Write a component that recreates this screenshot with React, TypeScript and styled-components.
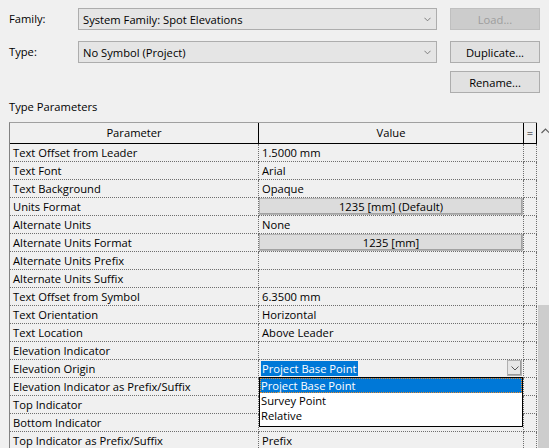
import React from 'react';
import styled, { createGlobalStyle } from 'styled-components';

const GlobalStyle = createGlobalStyle`
  html, body {
    margin: 0;
    padding: 0;
    background: #f0f0f0;
  }
  body {
    font-family: 'Open Sans', 'Noto Sans', sans-serif;
    font-size: 11.2px;
    color: #000;
  }
`;

const Window = styled.div`
  width: 549px;
  height: 448px;
  overflow: hidden;
  background: #f0f0f0;
`;

const TopGrid = styled.div`
  display: grid;
  grid-template-columns: 56px 359px 90px;
  grid-template-rows: 33px 30px 22px;
  column-gap: 13px;
  padding: 8px 0 0 9px;
  align-items: start;
`;

const Label = styled.div`
  line-height: 22px;
`;

const Combo = styled.div`
  height: 22px;
  box-sizing: border-box;
  border: 1px solid #adadad;
  background: #e5e5e5;
  display: flex;
  align-items: center;
  justify-content: space-between;
  padding: 0 5px 0 4px;
`;

const Button = styled.div<{ $disabled?: boolean }>`
  grid-column: 3;
  height: 22px;
  box-sizing: border-box;
  border: 1px solid ${(p) => (p.$disabled ? '#bfbfbf' : '#adadad')};
  background: ${(p) => (p.$disabled ? '#cccccc' : '#e1e1e1')};
  color: ${(p) => (p.$disabled ? '#9d9d9d' : '#000')};
  display: flex;
  align-items: center;
  justify-content: center;
`;

const SectionLabel = styled.div`
  padding-left: 9px;
  margin: 6px 0 7px;
  line-height: 16px;
`;

const TableArea = styled.div`
  display: flex;
  margin-left: 9px;
`;

const Table = styled.div`
  width: 528px;
  flex: none;
  border-left: 1px solid #828282;
  border-top: 1px solid #a0a0a0;
  box-sizing: border-box;
`;

const Row = styled.div<{ $header?: boolean }>`
  display: grid;
  grid-template-columns: 249px 265px 13px;
  height: ${(p) => (p.$header ? 21 : 18)}px;
`;

const Cell = styled.div<{ $header?: boolean; $center?: boolean }>`
  position: relative;
  box-sizing: border-box;
  display: flex;
  align-items: center;
  justify-content: ${(p) => (p.$center || p.$header ? 'center' : 'flex-start')};
  padding-left: ${(p) => (p.$center || p.$header ? 0 : 3)}px;
  padding-bottom: ${(p) => (p.$center ? 0 : 1)}px;
  border-right: 1px ${(p) => (p.$header ? 'solid #000' : 'dotted #6e6e6e')};
  border-bottom: 1px ${(p) => (p.$header ? 'solid #000' : 'dotted #6e6e6e')};
  white-space: nowrap;
`;

const ValueButton = styled.div`
  flex: 1;
  align-self: stretch;
  box-sizing: border-box;
  background: #dcdcdc;
  border: 1px solid #b4b4b4;
  box-shadow: inset -1px -1px 0 #a2a2a2;
  display: flex;
  align-items: center;
  justify-content: center;
`;

const Selected = styled.span`
  background: #0078d7;
  color: #fff;
  line-height: 15px;
  padding: 0 1px;
  margin-left: -1px;
`;

const DropButton = styled.div`
  position: absolute;
  right: 1px;
  top: 0;
  width: 15px;
  height: 16px;
  box-sizing: border-box;
  background: #e6e6e6;
  border: 1px solid #b0b0b0;
  box-shadow: inset -1px -1px 0 #9a9a9a;
  display: flex;
  align-items: center;
  justify-content: center;
`;

const DropList = styled.div`
  position: absolute;
  top: 100%;
  left: 0;
  width: 264px;
  height: 50px;
  box-sizing: border-box;
  border: 1px solid #000;
  background: #fff;
  z-index: 2;
`;

const Option = styled.div<{ $active?: boolean }>`
  height: 15px;
  line-height: 15px;
  box-sizing: border-box;
  padding-left: 1px;
  background: ${(p) => (p.$active ? '#0078d7' : 'transparent')};
  color: ${(p) => (p.$active ? '#fff' : '#000')};
  outline: ${(p) => (p.$active ? '1px dotted #e88a2a' : 'none')};
  outline-offset: -1px;
`;

const Scrollbar = styled.div`
  width: 17px;
  flex: none;
  background: #f0f0f0;
  display: flex;
  flex-direction: column;
  align-items: center;
`;

const ScrollArrow = styled.div`
  height: 17px;
  display: flex;
  align-items: center;
  justify-content: center;
`;

const Thumb = styled.div`
  width: 16px;
  margin-left: 1px;
  margin-top: 166px;
  height: 400px;
  background: #cdcdcd;
`;

const Chevron = ({ color = '#606060', w = 8 }: { color?: string; w?: number }) => (
  <svg width={w} height={5} viewBox="0 0 8 5">
    <path d="M0.5 0.5 L4 4 L7.5 0.5" fill="none" stroke={color} strokeWidth="1" />
  </svg>
);

type Param = {
  name: string;
  value?: string;
  button?: boolean;
  dropdown?: boolean;
};

const params: Param[] = [
  { name: 'Text Offset from Leader', value: '1.5000 mm' },
  { name: 'Text Font', value: 'Arial' },
  { name: 'Text Background', value: 'Opaque' },
  { name: 'Units Format', value: '1235 [mm] (Default)', button: true },
  { name: 'Alternate Units', value: 'None' },
  { name: 'Alternate Units Format', value: '1235 [mm]', button: true },
  { name: 'Alternate Units Prefix' },
  { name: 'Alternate Units Suffix' },
  { name: 'Text Offset from Symbol', value: '6.3500 mm' },
  { name: 'Text Orientation', value: 'Horizontal' },
  { name: 'Text Location', value: 'Above Leader' },
  { name: 'Elevation Indicator' },
  { name: 'Elevation Origin', value: 'Project Base Point', dropdown: true },
  { name: 'Elevation Indicator as Prefix/Suffix' },
  { name: 'Top Indicator' },
  { name: 'Bottom Indicator' },
  { name: 'Top Indicator as Prefix/Suffix', value: 'Prefix' }
];

const origins = ['Project Base Point', 'Survey Point', 'Relative'];

const renderValue = (p: Param) => {
  if (p.button) return <ValueButton>{p.value}</ValueButton>;
  if (p.dropdown) {
    return (
      <>
        <Selected>{p.value}</Selected>
        <DropButton>
          <Chevron color="#555" />
        </DropButton>
        <DropList>
          {origins.map((o, i) => (
            <Option key={o} $active={i === 0}>
              {o}
            </Option>
          ))}
        </DropList>
      </>
    );
  }
  return p.value;
};

const App: React.FC = () => (
  <Window>
    <GlobalStyle />
    <TopGrid>
      <Label>Family:</Label>
      <Combo>
        System Family: Spot Elevations
        <Chevron color="#707070" w={7} />
      </Combo>
      <Button $disabled>Load...</Button>
      <Label>Type:</Label>
      <Combo>
        No Symbol (Project)
        <Chevron color="#707070" w={7} />
      </Combo>
      <Button>Duplicate...</Button>
      <Button>Rename...</Button>
    </TopGrid>
    <SectionLabel>Type Parameters</SectionLabel>
    <TableArea>
      <Table>
        <Row $header>
          <Cell $header>Parameter</Cell>
          <Cell $header>Value</Cell>
          <Cell $header>=</Cell>
        </Row>
        {params.map((p) => (
          <Row key={p.name}>
            <Cell>{p.name}</Cell>
            <Cell $center={p.button}>{renderValue(p)}</Cell>
            <Cell />
          </Row>
        ))}
      </Table>
      <Scrollbar>
        <ScrollArrow>
          <svg width={9} height={6} viewBox="0 0 9 6">
            <path d="M0.5 5 L4.5 1 L8.5 5" fill="none" stroke="#606060" strokeWidth="1.2" />
          </svg>
        </ScrollArrow>
        <Thumb />
      </Scrollbar>
    </TableArea>
  </Window>
);

export default App;
